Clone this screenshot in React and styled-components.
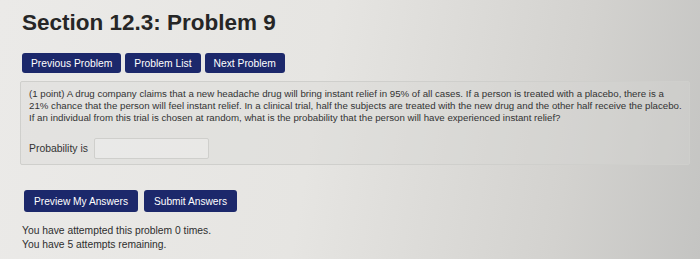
import React from "react";
import styled, { createGlobalStyle } from "styled-components";

const GlobalStyle = createGlobalStyle`
  html, body {
    margin: 0;
    padding: 0;
  }
  body {
    font-family: "Liberation Sans", Arial, sans-serif;
    background: linear-gradient(100deg, #ebeae8 0%, #e6e5e2 45%, #d3d2cf 80%, #c4c4c2 100%);
    width: 700px;
    height: 259px;
    overflow: hidden;
  }
`;

const Page = styled.div`
  padding: 10px 10px 0 22px;
  color: #2e2e2e;
`;

const Title = styled.h1`
  margin: 0;
  font-size: 22.5px;
  line-height: 26px;
  font-weight: 700;
  color: #262626;
`;

const NavBar = styled.div`
  display: flex;
  gap: 4px;
  margin-top: 17px;
`;

const NavButton = styled.button`
  font-family: inherit;
  font-size: 10.3px;
  height: 20px;
  padding: 0 9px;
  color: #fff;
  background: #1c286b;
  border: none;
  border-radius: 3px;
  cursor: pointer;
`;

const ProblemBox = styled.div`
  margin: 8px 0 0 -2px;
  width: 670px;
  box-sizing: border-box;
  padding: 6px 8px 5px;
  background: rgba(215, 214, 211, 0.35);
  border: 1px solid #cfcfcc;
  border-radius: 2px;
`;

const Text = styled.p`
  margin: 0;
  font-size: 9.7px;
  line-height: 12px;
  color: #333;
  white-space: nowrap;
`;

const AnswerRow = styled.div`
  display: flex;
  align-items: center;
  gap: 6px;
  margin-top: 14px;
  font-size: 10.4px;
  color: #333;
`;

const AnswerInput = styled.input`
  width: 115px;
  height: 21px;
  box-sizing: border-box;
  border: 1px solid #cfcfcc;
  border-radius: 2px;
  background: rgba(255, 255, 255, 0.25);
`;

const SubmitBar = styled.div`
  display: flex;
  gap: 6px;
  margin: 25px 0 0 2px;
  align-items: center;
`;

const ActionButton = styled(NavButton)`
  height: 22px;
  font-size: 10.2px;
  padding: 0 10px;
`;

const Attempts = styled.div`
  margin-top: 12px;
  font-size: 10.3px;
  line-height: 14px;
  color: #2e2e2e;
`;

export default function App() {
  return (
    <>
      <GlobalStyle />
      <Page>
        <Title>Section 12.3: Problem 9</Title>
        <NavBar>
          <NavButton>Previous Problem</NavButton>
          <NavButton>Problem List</NavButton>
          <NavButton>Next Problem</NavButton>
        </NavBar>
        <ProblemBox>
          <Text>
            (1 point) A drug company claims that a new headache drug will bring instant relief in 95% of all cases. If a person is treated with a placebo, there is a
          </Text>
          <Text>
            21% chance that the person will feel instant relief. In a clinical trial, half the subjects are treated with the new drug and the other half receive the placebo.
          </Text>
          <Text>
            If an individual from this trial is chosen at random, what is the probability that the person will have experienced instant relief?
          </Text>
          <AnswerRow>
            <span>Probability is</span>
            <AnswerInput type="text" />
          </AnswerRow>
        </ProblemBox>
        <SubmitBar>
          <ActionButton>Preview My Answers</ActionButton>
          <ActionButton>Submit Answers</ActionButton>
        </SubmitBar>
        <Attempts>
          You have attempted this problem 0 times.
          <br />
          You have 5 attempts remaining.
        </Attempts>
      </Page>
    </>
  );
}
